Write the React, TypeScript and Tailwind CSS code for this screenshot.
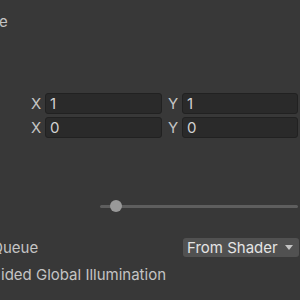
import React from "react";

function VecRow({ x, y }: { x: string; y: string }) {
  return (
    <div className="flex items-center h-[21px] pl-[31px]">
      <div className="w-[14px] text-[#c4c4c4]">X</div>
      <div className="w-[117px] h-[21px] rounded-[3px] bg-[#2a2a2a] border border-[#212121] flex items-center pl-[4px] text-[#d2d2d2]">
        {x}
      </div>
      <div className="w-[20px] pl-[6px] text-[#c4c4c4]">Y</div>
      <div className="w-[116px] h-[21px] rounded-[3px] bg-[#2a2a2a] border border-[#212121] flex items-center pl-[4px] text-[#d2d2d2]">
        {y}
      </div>
    </div>
  );
}

export default function App() {
  return (
    <div
      className="w-[300px] h-[300px] bg-[#383838] overflow-hidden flex flex-col text-[15px] leading-[18px] text-[#c4c4c4]"
      style={{ fontFamily: "Inter, 'Noto Sans', sans-serif" }}
    >
      <div className="mt-[13px] h-[18px] -ml-[1px]">e</div>
      <div className="mt-[62px] flex flex-col gap-[3px]">
        <VecRow x="1" y="1" />
        <VecRow x="0" y="0" />
      </div>
      <div className="mt-[62px] h-[12px] flex items-center pl-[100px] pr-[2px]">
        <div className="relative flex-1 h-[3px] bg-[#5e5e5e] rounded-full">
          <div className="absolute left-[10px] -top-[4.5px] w-[12px] h-[12px] rounded-full bg-[#999999]" />
        </div>
      </div>
      <div className="mt-[26px] h-[19px] flex items-center">
        <div className="flex-1 overflow-hidden whitespace-nowrap">
          <span className="-ml-[8.5px] inline-block">Queue</span>
        </div>
        <div className="w-[116px] mr-[1px] h-[19px] rounded-[3px] bg-[#515151] flex items-center justify-between pl-[4px] pr-[6px] text-[#e4e4e4]">
          <span>From Shader</span>
          <svg width="8" height="5" viewBox="0 0 8 5">
            <path d="M0 0 L8 0 L4 5 Z" fill="#c4c4c4" />
          </svg>
        </div>
      </div>
      <div className="mt-[9px] h-[18px] whitespace-nowrap pl-[1px]">ided Global Illumination</div>
    </div>
  );
}
